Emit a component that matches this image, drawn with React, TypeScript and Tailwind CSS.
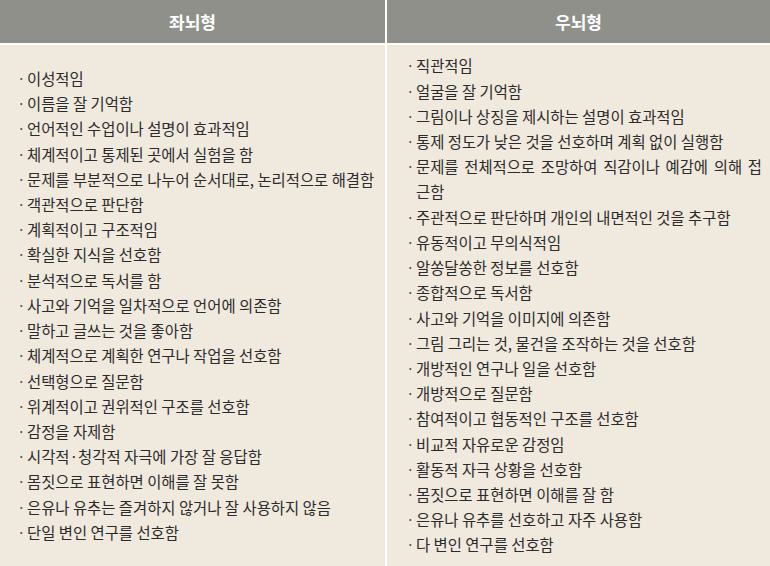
import React from "react";

const left = [
  "이성적임",
  "이름을 잘 기억함",
  "언어적인 수업이나 설명이 효과적임",
  "체계적이고 통제된 곳에서 실험을 함",
  "문제를 부분적으로 나누어 순서대로, 논리적으로 해결함",
  "객관적으로 판단함",
  "계획적이고 구조적임",
  "확실한 지식을 선호함",
  "분석적으로 독서를 함",
  "사고와 기억을 일차적으로 언어에 의존함",
  "말하고 글쓰는 것을 좋아함",
  "체계적으로 계획한 연구나 작업을 선호함",
  "선택형으로 질문함",
  "위계적이고 권위적인 구조를 선호함",
  "감정을 자제함",
  "시각적·청각적 자극에 가장 잘 응답함",
  "몸짓으로 표현하면 이해를 잘 못함",
  "은유나 유추는 즐겨하지 않거나 잘 사용하지 않음",
  "단일 변인 연구를 선호함",
];

const right = [
  "직관적임",
  "얼굴을 잘 기억함",
  "그림이나 상징을 제시하는 설명이 효과적임",
  "통제 정도가 낮은 것을 선호하며 계획 없이 실행함",
  "문제를 전체적으로 조망하여 직감이나 예감에 의해 접근함",
  "주관적으로 판단하며 개인의 내면적인 것을 추구함",
  "유동적이고 무의식적임",
  "알쏭달쏭한 정보를 선호함",
  "종합적으로 독서함",
  "사고와 기억을 이미지에 의존함",
  "그림 그리는 것, 물건을 조작하는 것을 선호함",
  "개방적인 연구나 일을 선호함",
  "개방적으로 질문함",
  "참여적이고 협동적인 구조를 선호함",
  "비교적 자유로운 감정임",
  "활동적 자극 상황을 선호함",
  "몸짓으로 표현하면 이해를 잘 함",
  "은유나 유추를 선호하고 자주 사용함",
  "다 변인 연구를 선호함",
];

function List({ items, pl, pr }: { items: string[]; pl: string; pr: string }) {
  return (
    <ul className={`${pl} ${pr} w-full`}>
      {items.map((t, i) => (
        <li key={i} className="flex leading-[25.2px]">
          <span className="w-[10px] shrink-0 text-[#555]">·</span>
          <span className="flex-1 text-justify">{t}</span>
        </li>
      ))}
    </ul>
  );
}

export default function App() {
  return (
    <div
      className="w-[770px] h-[566px] bg-white flex flex-col overflow-hidden text-[#2b2b2b] text-[15.4px]"
      style={{ fontFamily: '"Noto Sans CJK KR", "Noto Sans", sans-serif' }}
    >
      <div className="flex h-[43px] shrink-0">
        <div className="w-[385px] bg-[#8e9089] flex items-center justify-center text-white font-bold text-[17px]">
          좌뇌형
        </div>
        <div className="w-[2px] bg-white" />
        <div className="flex-1 bg-[#8e9089] flex items-center justify-center text-white font-bold text-[17px]">
          우뇌형
        </div>
      </div>
      <div className="h-[2px] bg-white shrink-0" />
      <div className="flex flex-1">
        <div className="w-[385px] bg-[#f0e9de] flex items-center">
          <List items={left} pl="pl-[17px]" pr="pr-[8px]" />
        </div>
        <div className="w-[2px] bg-white" />
        <div className="flex-1 bg-[#f0e9de] flex items-center">
          <List items={right} pl="pl-[19px]" pr="pr-[8px]" />
        </div>
      </div>
    </div>
  );
}
